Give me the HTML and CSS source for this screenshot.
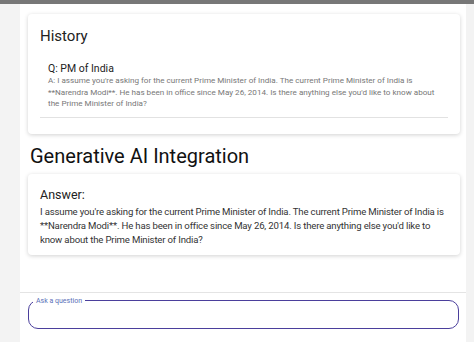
FILE: index.html
```html
<!DOCTYPE html>
<html lang="en">
<head>
  <meta charset="UTF-8" />
  <title>Generative AI Integration</title>
  <link rel="stylesheet" href="styles.css">
</head>
<body>
  <div class="topbar"></div>
  <div class="layout">
    <div class="side"></div>
    <main class="main">
      <section class="card history">
        <h2>History</h2>
        <div class="item">
          <div class="q">Q: PM of India</div>
          <div class="a">A: I assume you're asking for the current Prime Minister of India. The current Prime Minister of India is **Narendra Modi**. He has been in office since May 26, 2014. Is there anything else you'd like to know about the Prime Minister of India?</div>
        </div>
      </section>
      <h1>Generative AI Integration</h1>
      <section class="card answer">
        <h3>Answer:</h3>
        <p>I assume you're asking for the current Prime Minister of India. The current Prime Minister of India is **Narendra Modi**. He has been in office since May 26, 2014. Is there anything else you'd like to know about the Prime Minister of India?</p>
      </section>
      <div class="ask">
        <fieldset class="field">
          <legend>Ask a question</legend>
        </fieldset>
      </div>
    </main>
    <div class="side right"></div>
  </div>
</body>
</html>
```
FILE: styles.css
```css
html, body {
  margin: 0;
  padding: 0;
}
body {
  font-family: Roboto, "Liberation Sans", sans-serif;
  background-color: #f4f4f4;
  color: #222;
  height: 342px;
  overflow: hidden;
}
.topbar {
  height: 4px;
  background-color: #777;
}
.layout {
  display: flex;
  height: 338px;
}
.side {
  width: 20px;
  background-color: #f3f3f3;
}
.side.right {
  width: 8px;
}
.main {
  flex: 1;
  background-color: #fff;
  padding: 10px 6px 0 8px;
  display: flex;
  flex-direction: column;
}
.card {
  background-color: #fff;
  border-radius: 4px;
  box-shadow: 0 1px 4px rgba(0,0,0,0.18);
}
.history {
  padding: 13px 12px 16px 12px;
}
.history h2 {
  margin: 0 0 18px 0;
  font-size: 15px;
  font-weight: 400;
  color: #222;
}
.item {
  padding: 0 0 7px 8px;
  border-bottom: 1px solid #e2e2e2;
}
.q {
  font-size: 10.5px;
  color: #222;
  line-height: 12px;
}
.a {
  font-size: 8.1px;
  color: #777;
  line-height: 11.5px;
  padding-right: 12px;
}
h1 {
  margin: 10px 0 6px 2px;
  font-size: 20px;
  font-weight: 400;
  color: #111;
}
.answer {
  padding: 13px 12px 8px 12px;
}
.answer h3 {
  margin: 0 0 3px 0;
  font-size: 12.5px;
  font-weight: 400;
  color: #222;
}
.answer p {
  margin: 0;
  font-size: 9.6px;
  letter-spacing: -0.17px;
  line-height: 14px;
  color: #333;
}
.ask {
  margin-top: 37px;
  margin-left: -8px;
  margin-right: -6px;
  border-top: 1px solid #e4e4e4;
  padding: 4px 7px 0 8px;
}
.field {
  margin: 0;
  height: 30px;
  border: 1.5px solid #4b3f9c;
  border-radius: 10px;
  padding: 0 6px;
}
.field legend {
  font-size: 7px;
  color: #5a6fb8;
  padding: 0 3px;
  margin-left: -2px;
}
```
